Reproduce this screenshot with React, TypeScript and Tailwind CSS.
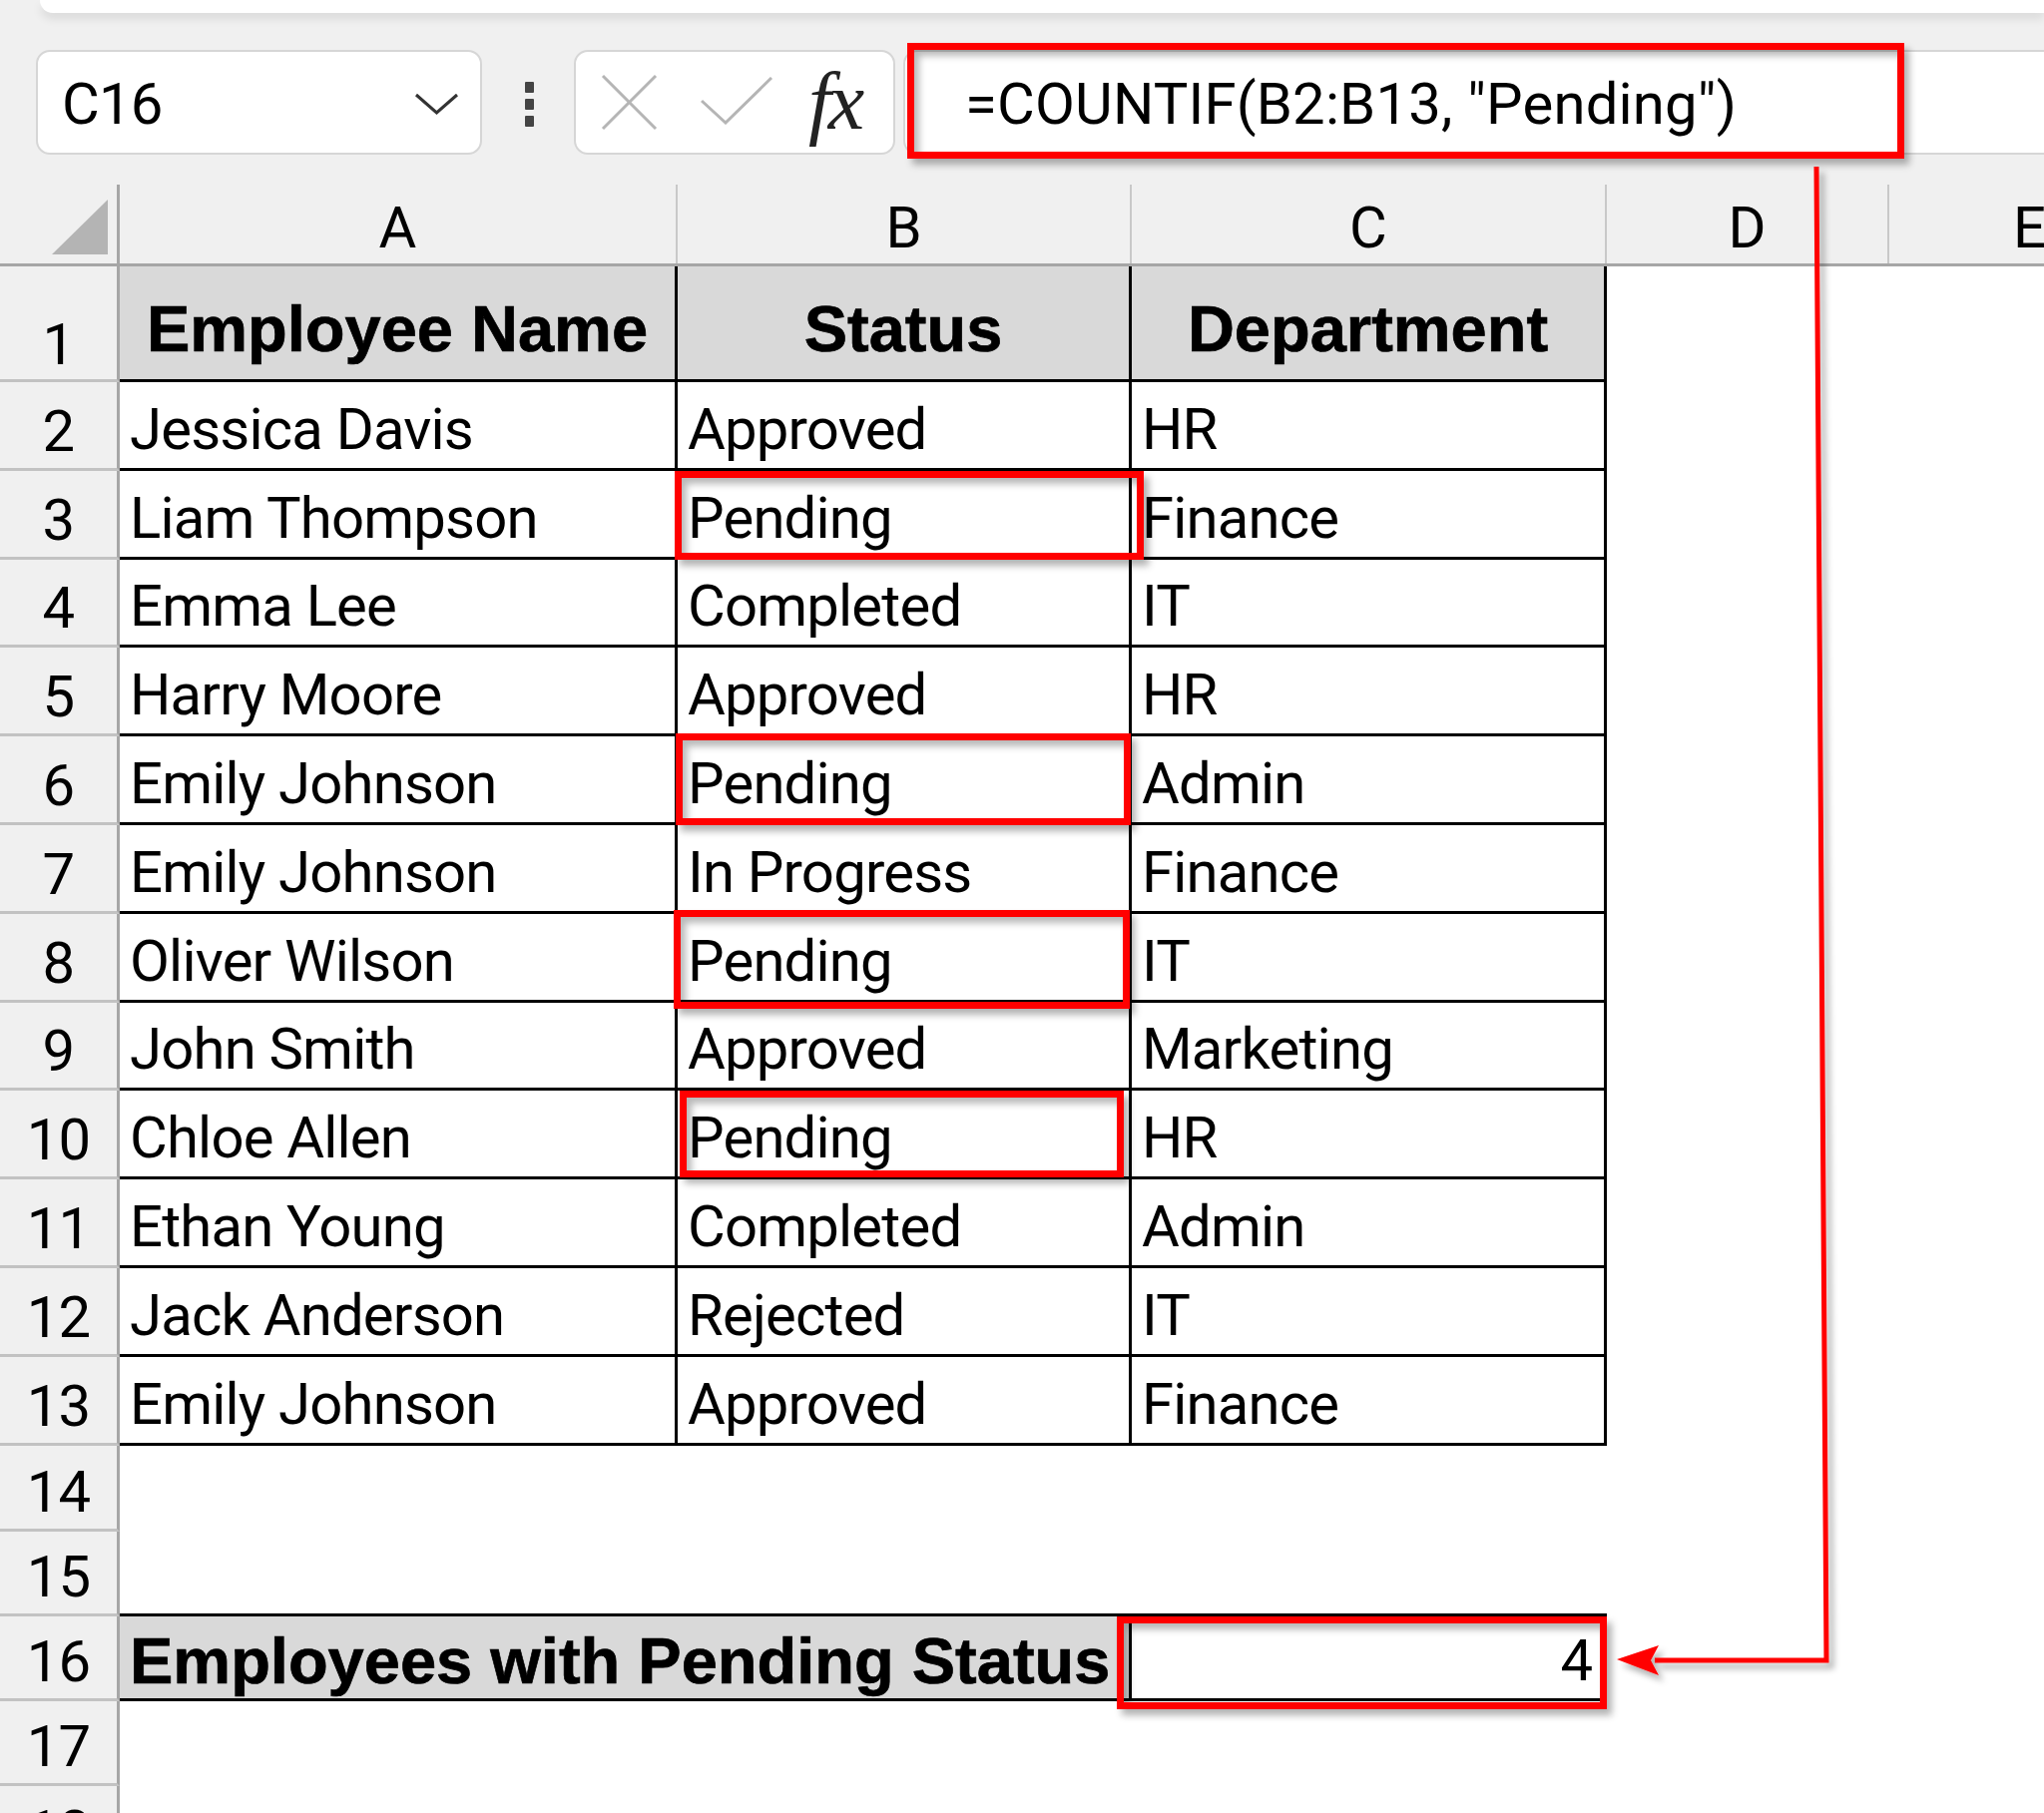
import React from "react";

const rows: [string, string, string][] = [
  ["Jessica Davis", "Approved", "HR"],
  ["Liam Thompson", "Pending", "Finance"],
  ["Emma Lee", "Completed", "IT"],
  ["Harry Moore", "Approved", "HR"],
  ["Emily Johnson", "Pending", "Admin"],
  ["Emily Johnson", "In Progress", "Finance"],
  ["Oliver Wilson", "Pending", "IT"],
  ["John Smith", "Approved", "Marketing"],
  ["Chloe Allen", "Pending", "HR"],
  ["Ethan Young", "Completed", "Admin"],
  ["Jack Anderson", "Rejected", "IT"],
  ["Emily Johnson", "Approved", "Finance"],
];

function RowHead({ n, pb = "pb-[8px]" }: { n: number; pb?: string }) {
  return (
    <div
      className={`w-[120px] shrink-0 h-full flex items-end justify-center border-r-[3px] border-r-[#a6a6a6] border-b-[3px] border-b-[#c2c2c2] bg-[#f0f0f0] text-[58px] leading-none tracking-[-0.8px] ${pb}`}
    >
      {n}
    </div>
  );
}

const cellBase =
  "h-full shrink-0 flex items-end border-r-[3px] border-b-[3px] border-black bg-white pl-[10px] pb-[10px] text-[58px] leading-none tracking-[-0.8px] whitespace-nowrap overflow-hidden";

const boldText =
  "font-['Liberation_Sans',Arial,sans-serif] font-bold text-[65px] leading-none whitespace-nowrap [-webkit-text-stroke:0.7px_black]";

function RedBox({ cls }: { cls: string }) {
  return (
    <div
      className={`absolute pointer-events-none border-[7px] border-[#ff0000] shadow-[5px_6px_7px_rgba(0,0,0,0.3),inset_5px_6px_7px_rgba(0,0,0,0.28)] ${cls}`}
    />
  );
}

export default function App() {
  return (
    <div className="relative w-[2048px] h-[1817px] overflow-hidden bg-[#f0f0f0] text-black font-['Roboto',sans-serif]">
      {/* Formula bar area */}
      <div className="h-[172px]">
        <div className="ml-[40px] h-[13px] bg-white rounded-bl-[16px] shadow-[0_6px_10px_rgba(0,0,0,0.09)]" />
        <div className="flex items-start mt-[37px]">
          {/* Name box */}
          <div className="ml-[36px] w-[447px] h-[105px] shrink-0 bg-white border-2 border-[#d6d6d6] rounded-[14px] flex items-center pl-[24px] pr-[21px] pt-[3px]">
            <span className="text-[58px] leading-none tracking-[-0.8px]">C16</span>
            <svg className="ml-auto" width="45" height="22" viewBox="0 0 45 22">
              <polyline points="2,2 22.5,20 43,2" fill="none" stroke="#333" strokeWidth="3" />
            </svg>
          </div>
          {/* Vertical dots */}
          <div className="ml-[43px] mt-[32px] flex flex-col gap-[6px] shrink-0">
            <div className="w-[9px] h-[11px] bg-[#444] rounded-[1px]" />
            <div className="w-[9px] h-[11px] bg-[#444] rounded-[1px]" />
            <div className="w-[9px] h-[11px] bg-[#444] rounded-[1px]" />
          </div>
          {/* Cancel / Enter / fx */}
          <div className="ml-[40px] w-[322px] h-[105px] shrink-0 bg-white border-2 border-[#d6d6d6] rounded-[14px] flex items-center pl-[25px]">
            <svg width="57" height="57" viewBox="0 0 57 57">
              <line x1="2" y1="2" x2="55" y2="55" stroke="#b5b5b5" strokeWidth="3" />
              <line x1="55" y1="2" x2="2" y2="55" stroke="#b5b5b5" strokeWidth="3" />
            </svg>
            <svg className="ml-[43px] -mt-[4px]" width="72" height="48" viewBox="0 0 72 48">
              <polyline points="1,24 25,46 71,1" fill="none" stroke="#b5b5b5" strokeWidth="3" />
            </svg>
            <span className="ml-[36px] -mt-[2px] font-['Liberation_Serif',serif] italic text-[82px] leading-none text-[#222] tracking-[-3px]">
              fx
            </span>
          </div>
          {/* Formula input */}
          <div className="ml-[8px] flex-1 h-[105px] bg-white border-y-2 border-l-2 border-[#d6d6d6] rounded-l-[14px] flex items-center pl-[60px] pt-[3px]">
            <span className="text-[58px] leading-none tracking-[0.2px] whitespace-nowrap">
              =COUNTIF(B2:B13, "Pending")
            </span>
          </div>
        </div>
      </div>

      {/* Column headers */}
      <div className="flex h-[95px] pt-[13px] border-b-[3px] border-[#a6a6a6]">
        <div className="w-[120px] shrink-0 h-full border-r-[3px] border-[#a6a6a6] flex items-start">
          <svg className="ml-[52px] mt-[15px]" width="56" height="55" viewBox="0 0 56 55">
            <polygon points="56,0 56,55 0,55" fill="#b4b4b4" />
          </svg>
        </div>
        {[
          ["A", "w-[559px]"],
          ["B", "w-[455px]"],
          ["C", "w-[476px]"],
          ["D", "w-[283px]"],
          ["E", "w-[283px]"],
        ].map(([l, w]) => (
          <div
            key={l}
            className={`${w} shrink-0 h-full border-r-2 border-[#c8c8c8] flex items-end justify-center pb-[7px] text-[58px] leading-none`}
          >
            {l}
          </div>
        ))}
      </div>

      {/* Row 1 header */}
      <div className="flex h-[116px]">
        <RowHead n={1} pb="pb-[6px]" />
        {["Employee Name", "Status", "Department"].map((t, i) => (
          <div
            key={t}
            className={`${i === 0 ? "w-[559px]" : i === 1 ? "w-[455px]" : "w-[476px]"} h-full shrink-0 flex items-end justify-center border-r-[3px] border-b-[3px] border-black bg-[#d9d9d9] pb-[18px] ${boldText}`}
          >
            {t}
          </div>
        ))}
        <div className="flex-1 h-full bg-white" />
      </div>

      {/* Data rows */}
      {rows.map((r, i) => (
        <div key={i} className="flex h-[88.8px]">
          <RowHead n={i + 2} />
          <div className={`${cellBase} w-[559px]`}>{r[0]}</div>
          <div className={`${cellBase} w-[455px]`}>{r[1]}</div>
          <div className={`${cellBase} w-[476px]`}>{r[2]}</div>
          <div className="flex-1 h-full bg-white" />
        </div>
      ))}

      {/* Row 14 */}
      <div className="flex h-[86px]">
        <RowHead n={14} />
        <div className="flex-1 h-full bg-white" />
      </div>
      {/* Row 15 */}
      <div className="flex h-[85px]">
        <RowHead n={15} />
        <div className="w-[1490px] shrink-0 h-full bg-white border-b-[3px] border-black" />
        <div className="flex-1 h-full bg-white" />
      </div>
      {/* Row 16 */}
      <div className="flex h-[85px]">
        <RowHead n={16} />
        <div className={`w-[1014px] shrink-0 h-full flex items-end bg-[#d9d9d9] border-r-[3px] border-b-[3px] border-black pl-[10px] pb-[5px] overflow-hidden ${boldText}`}>
          Employees with Pending Status
        </div>
        <div className="w-[476px] shrink-0 h-full flex items-end justify-end bg-white border-r-[3px] border-b-[3px] border-black pr-[11px] pb-[9px] text-[58px] leading-none">
          4
        </div>
        <div className="flex-1 h-full bg-white" />
      </div>
      {/* Row 17 */}
      <div className="flex h-[85px]">
        <RowHead n={17} />
        <div className="flex-1 h-full bg-white" />
      </div>
      {/* Row 18 */}
      <div className="flex h-[85px]">
        <RowHead n={18} />
        <div className="flex-1 h-full bg-white" />
      </div>

      {/* Annotations */}
      <RedBox cls="left-[909px] top-[43px] w-[999px] h-[116px]" />
      <RedBox cls="left-[676px] top-[472px] w-[470px] h-[89px]" />
      <RedBox cls="left-[677px] top-[735px] w-[456px] h-[92px]" />
      <RedBox cls="left-[675px] top-[912px] w-[457px] h-[99px]" />
      <RedBox cls="left-[681px] top-[1093px] w-[445px] h-[87px]" />
      <RedBox cls="left-[1119px] top-[1620px] w-[491px] h-[93px]" />

      <svg
        className="absolute left-0 top-0 pointer-events-none"
        width="2048"
        height="1817"
        viewBox="0 0 2048 1817"
      >
        <defs>
          <filter id="lnsh" filterUnits="userSpaceOnUse" x="1500" y="100" width="450" height="1650">
            <feDropShadow dx="5" dy="6" stdDeviation="3" floodColor="#000" floodOpacity="0.3" />
          </filter>
        </defs>
        <g filter="url(#lnsh)">
          <polyline
            points="1820,167 1830,1664 1658,1664"
            fill="none"
            stroke="#ff0000"
            strokeWidth="5"
            strokeLinejoin="miter"
          />
          <polygon points="1620,1663 1662,1649 1654,1664 1662,1679" fill="#ff0000" />
        </g>
      </svg>
    </div>
  );
}
